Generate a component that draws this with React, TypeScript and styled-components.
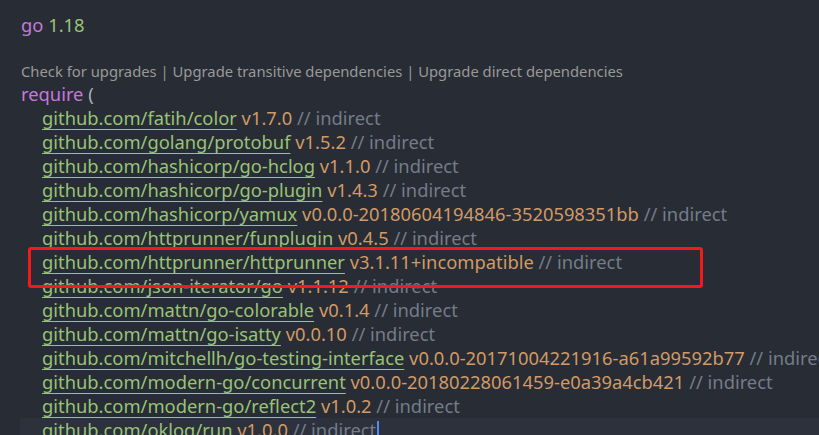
import React from "react";
import styled, { createGlobalStyle } from "styled-components";

const GlobalStyle = createGlobalStyle`
  html, body {
    margin: 0;
    padding: 0;
    background: #282c34;
    overflow: hidden;
  }
  #root {
    width: 819px;
    height: 435px;
    overflow: hidden;
  }
`;

const Editor = styled.div`
  position: relative;
  width: 819px;
  height: 435px;
  overflow: hidden;
  background: #282c34;
  padding-top: 13px;
  box-sizing: border-box;
  font-family: "Noto Sans", "Open Sans", sans-serif;
  font-size: 18.35px;
  color: #abb2bf;
`;

const Line = styled.div<{ $current?: boolean }>`
  height: 24px;
  line-height: 24px;
  white-space: pre;
  margin-left: 20px;
  padding-left: 1px;
  background: ${(p) => (p.$current ? "#2c313c" : "transparent")};
`;

const CodeLens = styled.div`
  height: 21px;
  line-height: 21px;
  margin-left: 20px;
  padding-left: 1px;
  white-space: pre;
  font-size: 14.8px;
  color: #999999;
`;

const Indent = styled.span`
  display: inline-block;
  width: 21px;
`;

const Keyword = styled.span`
  color: #c678dd;
`;

const Number = styled.span`
  color: #98c379;
`;

const Module = styled.span`
  color: #98c379;
  text-decoration: underline;
  text-decoration-thickness: 1px;
  text-underline-offset: 4px;
`;

const Version = styled.span`
  color: #d19a66;
`;

const Comment = styled.span`
  color: #747c89;
`;

const Cursor = styled.span`
  display: inline-block;
  width: 2px;
  height: 20px;
  margin-left: 1px;
  vertical-align: -4px;
  background: #528bff;
`;

const Highlight = styled.div`
  position: absolute;
  left: 28px;
  top: 247px;
  width: 675px;
  height: 41px;
  box-sizing: border-box;
  border: 3px solid #f4191b;
  border-radius: 3px;
  pointer-events: none;
`;

type Dep = { path: string; version: string };

const deps: Dep[] = [
  { path: "github.com/fatih/color", version: "v1.7.0" },
  { path: "github.com/golang/protobuf", version: "v1.5.2" },
  { path: "github.com/hashicorp/go-hclog", version: "v1.1.0" },
  { path: "github.com/hashicorp/go-plugin", version: "v1.4.3" },
  { path: "github.com/hashicorp/yamux", version: "v0.0.0-20180604194846-3520598351bb" },
  { path: "github.com/httprunner/funplugin", version: "v0.4.5" },
  { path: "github.com/httprunner/httprunner", version: "v3.1.11+incompatible" },
  { path: "github.com/json-iterator/go", version: "v1.1.12" },
  { path: "github.com/mattn/go-colorable", version: "v0.1.4" },
  { path: "github.com/mattn/go-isatty", version: "v0.0.10" },
  { path: "github.com/mitchellh/go-testing-interface", version: "v0.0.0-20171004221916-a61a99592b77" },
  { path: "github.com/modern-go/concurrent", version: "v0.0.0-20180228061459-e0a39a4cb421" },
  { path: "github.com/modern-go/reflect2", version: "v1.0.2" },
  { path: "github.com/oklog/run", version: "v1.0.0" },
];

export default function App() {
  return (
    <>
      <GlobalStyle />
      <Editor>
        <Line>
          <Keyword>go</Keyword> <Number>1.18</Number>
        </Line>
        <Line />
        <CodeLens>Check for upgrades | Upgrade transitive dependencies | Upgrade direct dependencies</CodeLens>
        <Line>
          <Keyword>require</Keyword> (
        </Line>
        {deps.map((d, i) => {
          const last = i === deps.length - 1;
          return (
            <Line key={d.path} $current={last}>
              <Indent />
              <Module>{d.path}</Module> <Version>{d.version}</Version> <Comment>// indirect</Comment>
              {last && <Cursor />}
            </Line>
          );
        })}
        <Highlight />
      </Editor>
    </>
  );
}
